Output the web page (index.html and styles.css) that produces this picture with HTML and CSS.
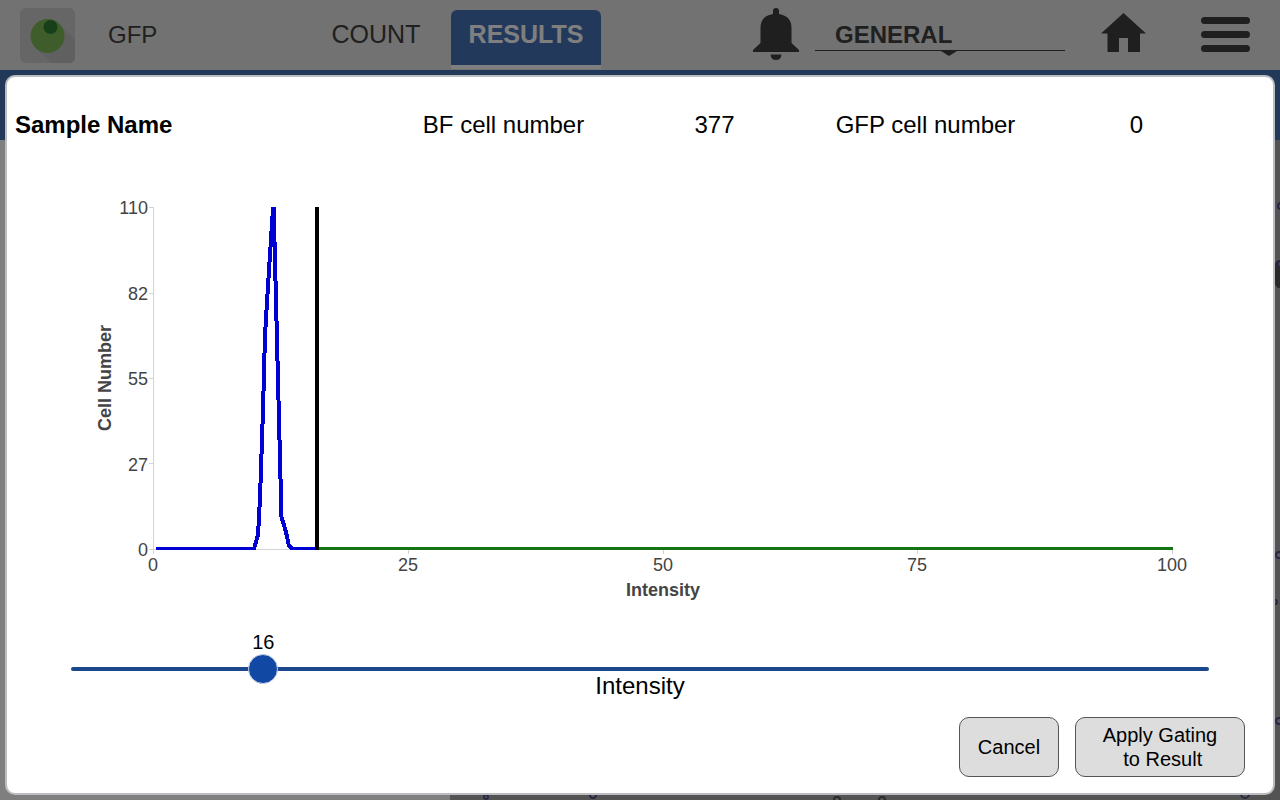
FILE: index.html
```
<!DOCTYPE html>
<html lang="en">
<head>
    <meta charset="UTF-8">
    <meta name="viewport" content="width=device-width, initial-scale=1.0">
    <title>GFP Results</title>
    <link rel="stylesheet" href="styles.css">
</head>
<body>
    <header class="topbar">
        <svg class="logo" viewBox="0 0 55 55" aria-hidden="true">
            <rect width="55" height="55" rx="6" fill="#cccccc"/>
            <path d="M43 20 L55 32 V49 Q55 55 49 55 H31 L16 40 Z" fill="#c0c0c0"/>
            <circle cx="27.500" cy="28" r="17" fill="#7eba56"/>
            <circle cx="30.500" cy="19" r="7" fill="#2f7f34"/>
        </svg>
        <span class="app-name">GFP</span>
        <nav class="tabs">
            <button class="tab">COUNT</button>
            <button class="tab active">RESULTS</button>
        </nav>
        <button class="icon-btn bell" aria-label="Notifications">
            <svg width="48" height="56" viewBox="0 0 48 56">
                <path d="M21 7 V3.500 Q21 1 24 1 Q27 1 27 3.500 V7 Q39.500 9 39.500 21 V36 L47 43 V45 H1 V43 L8.500 36 V21 Q8.500 9 21 7 Z"/>
                <path d="M18.500 47.500 H29.500 Q29 53 24 53 Q19 53 18.500 47.500 Z"/>
            </svg>
        </button>
        <div class="profile">
            <select class="profile-select" aria-label="Profile">
                <option>GENERAL</option>
            </select>
        </div>
        <button class="icon-btn home" aria-label="Home">
            <svg width="46" height="44" viewBox="0 0 46 44">
                <path d="M22.500 0 L45 20.500 H39 V39 H27 V25 H18 V39 H6.500 V20.500 H0 Z"/>
            </svg>
        </button>
        <button class="icon-btn menu" aria-label="Menu">
            <svg width="50" height="36" viewBox="0 0 50 36">
                <rect x="1" y="0" width="49" height="7" rx="3.500"/>
                <rect x="1" y="14" width="49" height="7" rx="3.500"/>
                <rect x="1" y="28" width="49" height="7" rx="3.500"/>
            </svg>
        </button>
    </header>
    <div class="subbar"></div>
    <main class="workspace">
        <div class="side-panel"></div>
        <svg class="cell-image" viewBox="0 0 830 660" preserveAspectRatio="xMaxYMax slice" aria-hidden="true">
            <ellipse cx="829" cy="134" rx="6" ry="14" fill="#555555"/>
            <g fill="#b8b8b8" stroke="#50508a" stroke-width="2">
                <circle cx="831" cy="66" r="3"/>
                <circle cx="831" cy="124" r="3"/>
                <circle cx="829" cy="415" r="3"/>
                <circle cx="825" cy="462" r="2"/>
                <circle cx="829" cy="581" r="3"/>
                <circle cx="795" cy="654" r="4"/>
                <circle cx="36" cy="657" r="2"/>
                <circle cx="143" cy="655" r="3"/>
            </g>
            <g fill="#b8b8b8" stroke="#555555" stroke-width="2">
                <circle cx="387" cy="660" r="3"/>
                <circle cx="432" cy="660" r="3"/>
            </g>
        </svg>
    </main>

    <div class="overlay">
        <section class="modal" role="dialog" aria-label="Gating">
            <div class="summary">
                <strong class="sample">Sample Name</strong>
                <span>BF cell number</span>
                <span>377</span>
                <span>GFP cell number</span>
                <span>0</span>
            </div>

            <svg class="chart" viewBox="0 0 1266 437" role="img" aria-label="Cell number by intensity">
                <defs>
                    <clipPath id="plot">
                        <rect x="0" y="0" width="1020" height="343"/>
                    </clipPath>
                </defs>
                <g transform="translate(146 34)">
                    <path class="axis" d="M0.500 0 V347 M-4 0.500 H0 M-4 86.500 H0 M-4 171.500 H0 M-4 256.500 H0 M-4 342.500 H1020 M255.500 342 V347 M510.500 342 V347 M764.500 342 V347 M1019.500 342 V347"/>
                    <g class="tick-labels y-labels">
                        <text x="-5" y="7">110</text>
                        <text x="-5" y="93">82</text>
                        <text x="-5" y="178">55</text>
                        <text x="-5" y="264">27</text>
                        <text x="-5" y="349">0</text>
                    </g>
                    <g class="tick-labels x-labels">
                        <text x="0" y="364">0</text>
                        <text x="255" y="364">25</text>
                        <text x="510" y="364">50</text>
                        <text x="764" y="364">75</text>
                        <text x="1019" y="364">100</text>
                    </g>
                    <text class="axis-title" x="510" y="389">Intensity</text>
                    <text class="axis-title" transform="translate(-42 171) rotate(-90)">Cell Number</text>
                    <g class="series" clip-path="url(#plot)">
                        <path class="bf" d="M3 342 H101 L105 328 L107 291 L110 203 L112 128 L116 63 L120.500 -6 L123 93 L125.500 193 L128.500 310 L133 325 L136 339 L140 342 H164"/>
                        <path class="gfp" d="M164 342 H1020"/>
                        <path class="gate" d="M164 0 V343"/>
                    </g>
                </g>
            </svg>

            <div class="slider">
                <div class="slider-track" style="--value: 16">
                    <output class="slider-value" for="intensity">16</output>
                    <input type="range" id="intensity" min="0" max="100" value="16">
                </div>
                <label for="intensity">Intensity</label>
            </div>

            <div class="actions">
                <button class="btn cancel">Cancel</button>
                <button class="btn apply">Apply Gating<br>&nbsp;to Result</button>
            </div>
        </section>
    </div>

    <script>
        const slider = document.getElementById('intensity');
        slider.addEventListener('input', () => {
            slider.parentElement.style.setProperty('--value', slider.value);
            document.querySelector('.slider-value').textContent = slider.value;
        });
    </script>
</body>
</html>
```
FILE: styles.css
```
* {
    margin: 0;
    padding: 0;
    box-sizing: border-box;
    font-family: "Liberation Sans", Arial, sans-serif;
}

body {
    display: flex;
    flex-direction: column;
    min-height: 100vh;
    font-size: 24px;
    color: #000;
    background: #fff;
}

button {
    border: none;
    cursor: pointer;
}

/* Top bar */
.topbar {
    display: flex;
    align-items: center;
    height: 70px;
    padding: 0 30px 0 20px;
    background: #e4e4e4;
    color: #404040;
}

.logo {
    width: 55px;
    height: 55px;
}

.app-name {
    flex: 1;
    padding-left: 33px;
}

.tabs {
    display: flex;
    align-self: flex-end;
    padding-bottom: 1px;
}

.tab {
    width: 150px;
    height: 59px;
    padding-bottom: 6px;
    border-bottom: 4px solid transparent;
    background: none;
    font-size: 25px;
    color: #404040;
}

.tab.active {
    border-radius: 6px 6px 0 0;
    border-bottom-color: #fff;
    background: #4472b8;
    background-clip: padding-box;
    color: #fff;
    font-weight: bold;
}

.icon-btn {
    background: none;
    fill: #3e3e3e;
}

.icon-btn svg {
    display: block;
}

.bell {
    margin-left: 151px;
}

.profile {
    position: relative;
    width: 250px;
    margin: 0 36px 0 15px;
}

.profile::after {
    content: '';
    position: absolute;
    left: 126px;
    bottom: -5px;
    border: 8px solid transparent;
    border-top: 5px solid #3e3e3e;
    border-bottom: none;
}

.profile-select {
    display: block;
    width: 100%;
    height: 32px;
    padding-left: 20px;
    border: none;
    border-bottom: 1px solid #3e3e3e;
    appearance: none;
    background: none;
    color: #404040;
    font-size: 24px;
    font-weight: bold;
}

.menu {
    margin-left: 53px;
}

.subbar {
    height: 70px;
    background: #4672b2;
}

.workspace {
    display: flex;
    flex: 1;
    min-height: 0;
}

.side-panel {
    flex: 0 0 450px;
}

.cell-image {
    flex: 1;
    min-width: 0;
    height: calc(100vh - 140px);
    background: #a4a6a5;
}

/* Gating dialog */
.overlay {
    position: absolute;
    inset: 0;
    padding: 75px 5px 5px;
    background: rgba(0, 0, 0, 0.5);
}

.modal {
    border: 2px solid #bbbdc2;
    border-radius: 10px;
    background: #fff;
}

.summary {
    display: grid;
    grid-template-columns: 383fr repeat(4, 211fr);
    padding: 34px 31px 34px 8px;
    line-height: 28px;
    text-align: center;
}

.sample {
    text-align: left;
}

.chart {
    display: block;
    width: 100%;
}

.axis {
    fill: none;
    stroke: #d3d3d3;
}

.tick-labels,
.axis-title {
    font-size: 18px;
    fill: #444;
}

.y-labels {
    text-anchor: end;
}

.x-labels,
.axis-title {
    text-anchor: middle;
}

.axis-title {
    font-weight: bold;
}

.series {
    fill: none;
    stroke-width: 4px;
    shape-rendering: crispEdges;
}

.bf {
    stroke: #0000d4;
}

.gfp {
    stroke: #147414;
}

.gate {
    stroke: #000;
}

.slider {
    padding: 57px 64px 0;
    text-align: center;
    line-height: 30px;
}

.slider-track {
    position: relative;
}

.slider-value {
    position: absolute;
    bottom: 14px;
    left: calc(15px + (100% - 30px) * var(--value) / 100);
    transform: translateX(-50%);
    font-size: 20px;
}

.slider input {
    display: block;
    width: 100%;
    height: 4px;
    appearance: none;
    border-radius: 2px;
    background: #1b488c;
}

.slider input::-webkit-slider-thumb {
    width: 30px;
    height: 30px;
    appearance: none;
    border: 1px solid #c4cfe4;
    border-radius: 50%;
    background: #1048a4;
    cursor: pointer;
}

.slider label {
    display: block;
}

.actions {
    display: flex;
    justify-content: flex-end;
    gap: 16px;
    padding: 16px 28px;
}

.btn {
    width: 100px;
    height: 60px;
    border: 1px solid #555;
    border-radius: 10px;
    background: #ddd;
    color: #000;
    font-size: 20px;
    line-height: 24px;
}

.apply {
    width: 170px;
}
```
